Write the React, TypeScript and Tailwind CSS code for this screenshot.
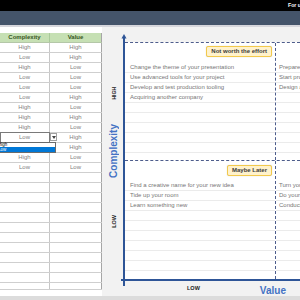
import React from "react";

const rows: [string, string][] = [
  ["High", "High"],
  ["Low", "High"],
  ["High", "Low"],
  ["Low", "Low"],
  ["Low", "Low"],
  ["Low", "High"],
  ["High", "Low"],
  ["High", "High"],
  ["High", "Low"],
  ["Low", "High"],
  ["High", "High"],
  ["High", "Low"],
  ["Low", "Low"],
  ["", ""],
  ["", ""],
  ["", ""],
  ["", ""],
  ["", ""],
  ["", ""],
  ["", ""],
  ["", ""],
  ["", ""],
  ["", ""],
  ["", ""],
];

function QuadRows({ items, count, pl }: { items: string[]; count: number; pl: string }) {
  const list = Array.from({ length: count }, (_, i) => items[i] ?? "");
  return (
    <div className="flex flex-col">
      {list.map((t, i) => (
        <div
          key={i}
          className={`h-[10px] border-b border-[#ebebeb] ${pl} text-[6px] leading-[9px] text-[#767676] whitespace-nowrap overflow-hidden`}
        >
          {t}
        </div>
      ))}
    </div>
  );
}

function Tag({ children }: { children: React.ReactNode }) {
  return (
    <div className="h-[11px] px-[4px] bg-[#fff2cc] border border-[#f2c94c] rounded-[2px] shadow-[0_0_1px_rgba(0,0,0,0.25)] text-[6px] leading-[9px] font-bold text-[#3b3b3b] whitespace-nowrap">
      {children}
    </div>
  );
}

export default function App() {
  return (
    <div className="w-[300px] h-[300px] overflow-hidden bg-white flex flex-col [font-family:'Liberation_Sans',Arial,sans-serif]">
      <div className="h-[11px] shrink-0 bg-black overflow-hidden flex items-center pl-[288px] whitespace-nowrap text-[5.2px] font-bold text-white">
        For use in planning
      </div>
      <div className="h-[14px] shrink-0 bg-[#44546a]" />
      <div className="h-[2px] shrink-0 bg-[#d6d6dc]" />

      <div className="flex flex-1 min-h-0">
        {/* Table */}
        <div className="w-[102px] shrink-0 pt-[6px] flex flex-col bg-white">
          <div className="grid grid-cols-[50px_52px] h-[10px] shrink-0 bg-[#c6e0b4] border-b border-[#b4c7a8]">
            <div className="border-r border-[#a9c99a] text-center font-bold text-[6px] leading-[9px] text-[#375623]">
              Complexity
            </div>
            <div className="border-r border-[#a6a6a6] text-center font-bold text-[6px] leading-[9px] text-[#375623]">
              Value
            </div>
          </div>
          {rows.map(([a, b], i) => (
            <div key={i} className="grid grid-cols-[50px_52px] h-[10px] shrink-0 border-b border-[#cfcfcf]">
              <div className="relative border-r border-[#c6c6c6] text-center text-[6px] leading-[9px] text-[#7f7f7f]">
                {a}
                {i === 9 && (
                  <>
                    <div className="absolute left-0 -top-[1px] w-[50px] h-[11px] border border-[#7a7a7a]" />
                    <div className="absolute left-[50px] top-0 w-[7px] h-[8px] bg-white border border-[#a0a0a0] flex items-center justify-center">
                      <svg width="4" height="3" viewBox="0 0 4 3">
                        <polygon points="0,0 4,0 2,3" fill="#444" />
                      </svg>
                    </div>
                    <div className="absolute -left-[4px] top-[9px] w-[60px] h-[11px] bg-white border border-[#6b6b6b] flex flex-col z-10 text-left">
                      <div className="h-[4px] pl-[1px] text-[4.5px] leading-[4.5px] text-black">High</div>
                      <div className="h-[5px] pl-[1px] bg-[#0078d7] text-[4.5px] leading-[5px] text-white">Low</div>
                    </div>
                  </>
                )}
              </div>
              <div className="border-r border-[#a6a6a6] text-center text-[6px] leading-[9px] text-[#7f7f7f]">{b}</div>
            </div>
          ))}
          <div className="grid grid-cols-[50px_52px] h-[7px] shrink-0 border-b border-[#cfcfcf]">
            <div className="border-r border-[#c6c6c6]" />
            <div className="border-r border-[#a6a6a6]" />
          </div>
        </div>

        {/* Chart panel */}
        <div className="flex-1 flex bg-[#f2f2f2]">
          <div className="w-[21px] shrink-0 flex flex-col items-center pl-[2px]">
            <div className="h-[60px] shrink-0" />
            <div className="[writing-mode:vertical-rl] rotate-180 text-[5px] leading-[6px] font-bold text-[#1a1a1a]">HIGH</div>
            <div className="h-[24px] shrink-0" />
            <div className="[writing-mode:vertical-rl] rotate-180 text-[10px] leading-[12px] font-bold text-[#4472c4]">Complexity</div>
            <div className="h-[38px] shrink-0" />
            <div className="[writing-mode:vertical-rl] rotate-180 text-[5.5px] leading-[6px] font-bold text-[#1a1a1a]">LOW</div>
          </div>

          <div className="flex-1 flex flex-col min-w-0">
            <div className="h-[15px] shrink-0 relative">
              <svg className="absolute left-[-3px] bottom-0" width="8" height="8" viewBox="0 0 8 8">
                <polygon points="4,0 1.5,4.5 6.5,4.5" fill="#2e5597" />
                <rect x="3" y="3" width="2" height="5" fill="#2e5597" />
              </svg>
            </div>

            <div className="h-[239px] shrink-0 relative border-l-2 border-b-2 border-[#2e5597] flex flex-col">
              <div className="absolute -left-[4px] -bottom-[2px] w-[2px] h-[2px] bg-[#2e5597]" />
              <div className="h-[119px] shrink-0 grid grid-cols-[151px_1fr] border-t border-b border-dashed border-[#4e5d8c] bg-white overflow-hidden">
                <div className="border-r border-dashed border-[#4e5d8c] flex flex-col">
                  <div className="flex justify-end pr-[3px] mt-[3px]">
                    <Tag>Not worth the effort</Tag>
                  </div>
                  <div className="mt-[6px]">
                    <QuadRows
                      pl="pl-[5px]"
                      count={9}
                      items={[
                        "Change the theme of your presentation",
                        "Use advanced tools for your project",
                        "Develop and test production tooling",
                        "Acquiring another company",
                      ]}
                    />
                  </div>
                </div>
                <div className="flex flex-col min-w-0">
                  <div className="h-[20px] shrink-0" />
                  <QuadRows
                    pl="pl-[3px]"
                    count={9}
                    items={["Prepare a presentation", "Start programming", "Design a new logo"]}
                  />
                </div>
              </div>
              <div className="flex-1 grid grid-cols-[151px_1fr] bg-white overflow-hidden">
                <div className="border-r border-dashed border-[#4e5d8c] flex flex-col">
                  <div className="flex justify-end pr-[3px] mt-[4px]">
                    <Tag>Maybe Later</Tag>
                  </div>
                  <div className="mt-[5px]">
                    <QuadRows
                      pl="pl-[5px]"
                      count={9}
                      items={[
                        "Find a creative name for your new idea",
                        "Tide up your room",
                        "Learn something new",
                      ]}
                    />
                  </div>
                </div>
                <div className="flex flex-col min-w-0">
                  <div className="h-[20px] shrink-0" />
                  <QuadRows
                    pl="pl-[3px]"
                    count={9}
                    items={["Turn your ideas into action", "Do your homework", "Conduct a survey"]}
                  />
                </div>
              </div>
            </div>

            <div className="flex-1 relative flex items-start">
              <div className="absolute left-0 top-0 w-[2px] h-[5px] bg-[#2e5597]" />
              <div className="ml-[64px] mt-[3px] text-[5.5px] leading-[8px] font-bold text-[#1a1a1a]">LOW</div>
              <div className="ml-[60px] mt-[4px] text-[10px] leading-[12px] font-bold text-[#4472c4]">Value</div>
            </div>
          </div>
        </div>
      </div>
      <div className="h-[4px] shrink-0 bg-[#dcdcdc]" />
    </div>
  );
}
